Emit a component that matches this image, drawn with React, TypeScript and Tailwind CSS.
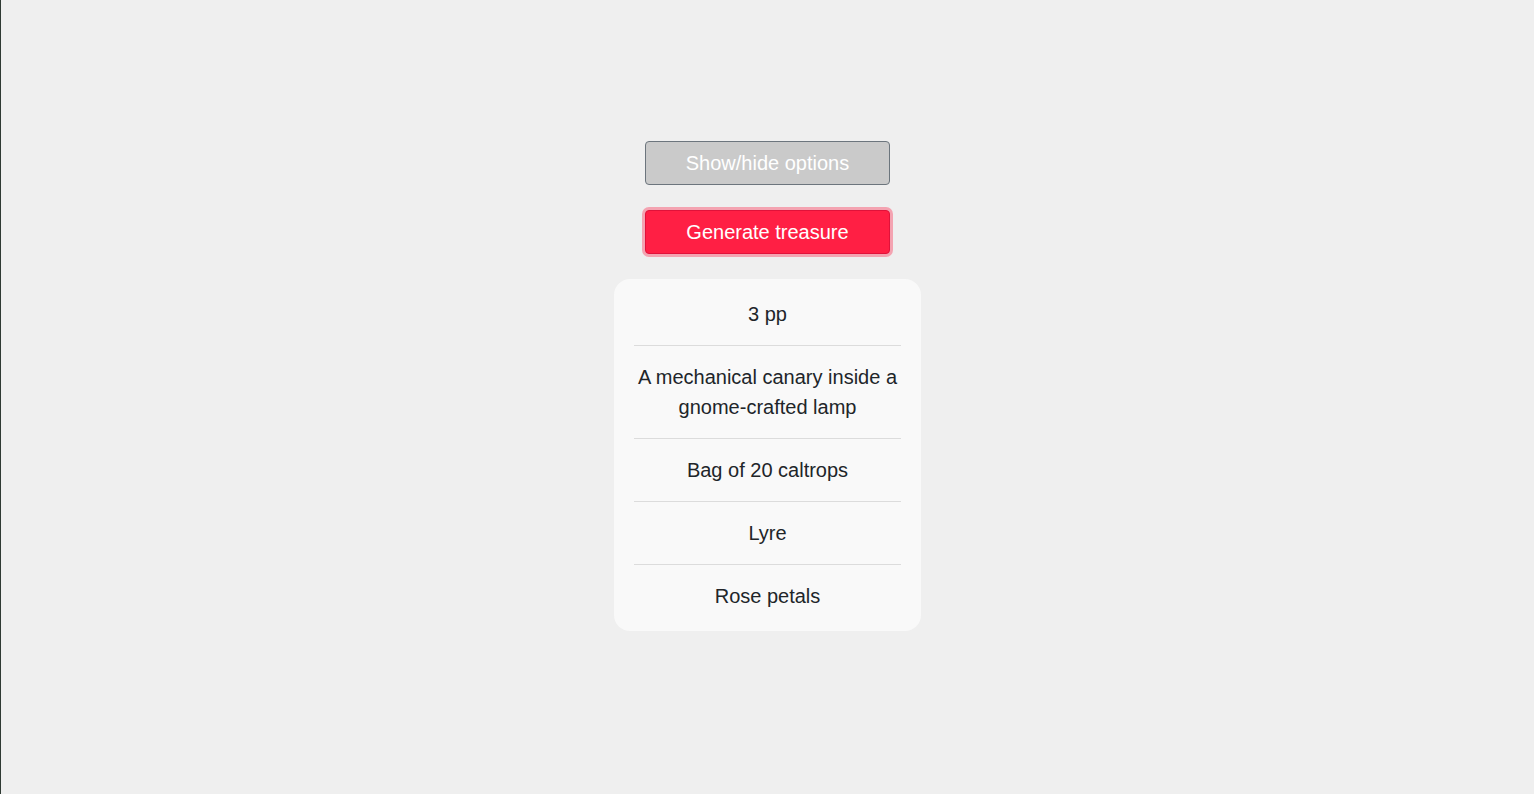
import React from "react";

const items = [
  "3 pp",
  "A mechanical canary inside a gnome-crafted lamp",
  "Bag of 20 caltrops",
  "Lyre",
  "Rose petals",
];

export default function App() {
  return (
    <div
      className="min-h-[794px] w-full bg-[#efefef] border-l border-[#2f3a33] flex flex-col items-center pt-[141px]"
      style={{ fontFamily: '"Liberation Sans", Arial, sans-serif' }}
    >
      <button className="w-[245px] h-[44px] bg-[#cacaca] border border-[#6c757d] rounded-[4px] text-white text-[20px] leading-[30px]">
        Show/hide options
      </button>
      <button className="mt-[25px] w-[245px] h-[44px] bg-[#ff1f44] border border-[#e0123a] rounded-[4px] text-white text-[20px] leading-[30px] ring-[3px] ring-[#f4a3b1]">
        Generate treasure
      </button>
      <div className="mt-[25px] w-[307px] bg-[#f9f9f9] rounded-[16px] py-1 px-5">
        {items.map((t, i) => (
          <div
            key={i}
            className={`py-4 text-center text-[20px] leading-[30px] text-[#212529] ${
              i < items.length - 1 ? "border-b border-[#dcdcdc]" : ""
            }`}
          >
            {t}
          </div>
        ))}
      </div>
    </div>
  );
}
